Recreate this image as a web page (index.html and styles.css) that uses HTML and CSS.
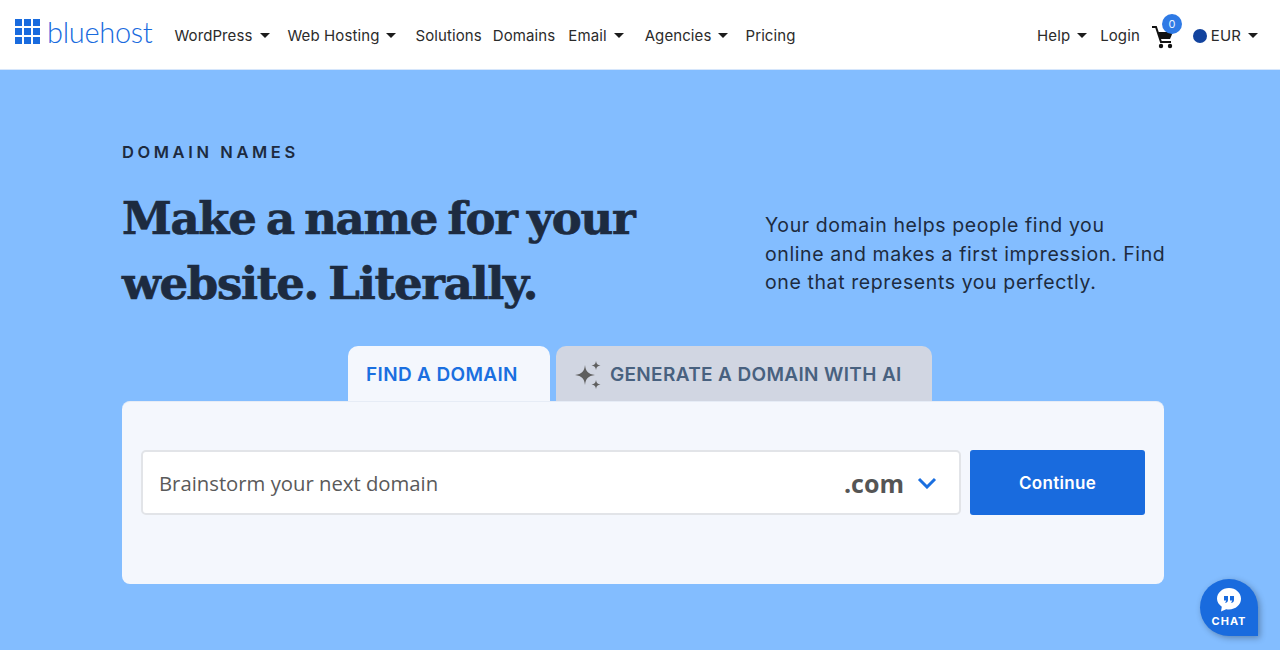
FILE: index.html
```html
<!DOCTYPE html>
<html lang="en">

<head>
    <meta charset="UTF-8">
    <meta name="viewport" content="width=device-width, initial-scale=1.0">
    <title>Domain Names - bluehost</title>
    <link rel="stylesheet" href="styles.css">
</head>

<body>
    <header class="topbar">
        <a class="logo" href="#">
            <svg class="logo-grid" width="25" height="25" viewBox="0 0 25 25">
                <rect x="0" y="0" width="7" height="7" /><rect x="9" y="0" width="7" height="7" /><rect x="18" y="0" width="7" height="7" />
                <rect x="0" y="9" width="7" height="7" /><rect x="9" y="9" width="7" height="7" /><rect x="18" y="9" width="7" height="7" />
                <rect x="0" y="18" width="7" height="7" /><rect x="9" y="18" width="7" height="7" /><rect x="18" y="18" width="7" height="7" />
            </svg>
            <span class="logo-text">bluehost</span>
        </a>

        <nav class="nav-main">
            <a class="nav-link caret wordpress" href="#">WordPress</a>
            <a class="nav-link caret hosting" href="#">Web Hosting</a>
            <a class="nav-link solutions" href="#">Solutions</a>
            <a class="nav-link domains" href="#">Domains</a>
            <a class="nav-link caret email" href="#">Email</a>
            <a class="nav-link caret agencies" href="#">Agencies</a>
            <a class="nav-link" href="#">Pricing</a>
        </nav>

        <nav class="nav-side">
            <a class="nav-link caret" href="#">Help</a>
            <a class="nav-link" href="#">Login</a>
            <a class="cart" href="#">
                <svg width="24" height="26" viewBox="0 0 24 26">
                    <path d="M1 4h4l5 15h10" fill="none" stroke="#111" stroke-width="2" />
                    <path d="M7 9h15l-3 7H9z" fill="#111" />
                    <circle cx="10" cy="23" r="2.200" fill="#111" />
                    <circle cx="19" cy="23" r="2.200" fill="#111" />
                </svg>
                <span class="cart-count">0</span>
            </a>
            <a class="nav-link caret currency" href="#"><span class="flag"></span>EUR</a>
        </nav>
    </header>

    <main class="hero">
        <div class="hero-inner">
            <p class="eyebrow">DOMAIN NAMES</p>
            <div class="hero-row">
                <h1>Make a name for your website. Literally.</h1>
                <p class="lead">Your domain helps people find you online and makes a first impression. Find one that represents you perfectly.</p>
            </div>

            <div class="tabs">
                <button class="tab active" type="button">FIND A DOMAIN</button>
                <button class="tab" type="button">
                    <svg width="27" height="28" viewBox="0 0 27 28">
                        <path d="M10 4c.8 6.500 3 9 10 10-7 1-9.200 3.500-10 10-.8-6.500-3-9-10-10 7-1 9.200-3.500 10-10z" fill="#5f5f5f" />
                        <path d="M21 0c.5 3 1.500 4 4.500 4.500-3 .5-4 1.500-4.500 4.500-.5-3-1.500-4-4.500-4.500 3-.5 4-1.500 4.500-4.500z" fill="#5f5f5f" />
                        <path d="M21 19c.5 3 1.500 4 4.500 4.500-3 .5-4 1.500-4.500 4.500-.5-3-1.500-4-4.500-4.500 3-.5 4-1.500 4.500-4.500z" fill="#5f5f5f" />
                    </svg>
                    GENERATE A DOMAIN WITH AI
                </button>
            </div>

            <div class="search-card">
                <form class="search-form">
                    <div class="search-box">
                        <input type="text" placeholder="Brainstorm your next domain">
                        <span class="tld">.com</span>
                        <svg class="tld-arrow" width="20" height="12" viewBox="0 0 20 12">
                            <path d="M2 2l8 8 8-8" fill="none" stroke="#1a6fe0" stroke-width="3" />
                        </svg>
                    </div>
                    <button class="btn" type="button">Continue</button>
                </form>
            </div>
        </div>

        <a class="chat" href="#">
            <svg width="26" height="25" viewBox="0 0 26 25">
                <path d="M13 1c6.600 0 12 4.800 12 10.800 0 6-5.400 10.700-12 10.700-1 0-1.900-.1-2.800-.3L5 24.500l.8-4.800C3 17.800 1 15 1 11.800 1 5.800 6.400 1 13 1z" fill="#fff" />
                <path d="M8 9h4v4c0 1.500-1 2.600-2.400 3l-.4-1c.7-.3 1-.8 1-1.500H8zM14 9h4v4c0 1.500-1 2.600-2.400 3l-.4-1c.7-.3 1-.8 1-1.500H14z" fill="#196bde" />
            </svg>
            <span>CHAT</span>
        </a>
    </main>
</body>

</html>
```

FILE: styles.css
```css
* {
    margin: 0;
    padding: 0;
    box-sizing: border-box;
}

html,
body {
    height: 100%;
    overflow: hidden;
}

body {
    font-family: 'Inter', 'Liberation Sans', sans-serif;
    background: #83bdff;
    color: #1d2b40;
}

a {
    color: inherit;
    text-decoration: none;
}

/* Top bar */
.topbar {
    height: 70px;
    background: white;
    border-bottom: 1px solid #d6e6fb;
    display: flex;
    align-items: center;
    padding: 0 22px 0 15px;
}

.logo {
    display: flex;
    align-items: center;
    gap: 7px;
    margin-right: 22px;
    margin-top: -6px;
}

.logo-grid {
    fill: #196bde;
    flex-shrink: 0;
}

.logo-text {
    font-family: 'Lato', sans-serif;
    font-weight: 300;
    font-size: 29px;
    line-height: 1;
    color: #196bde;
    letter-spacing: -0.3px;
}

.nav-main,
.nav-side {
    display: flex;
    align-items: center;
    padding-top: 2px;
}

.nav-side {
    margin-left: auto;
}

.nav-link {
    display: inline-flex;
    align-items: center;
    font-size: 15px;
    letter-spacing: 0.1px;
    color: #2b2b2b;
    white-space: nowrap;
}

.caret::after {
    content: "";
    margin-left: 7px;
    border-left: 5px solid transparent;
    border-right: 5px solid transparent;
    border-top: 5px solid #1c1c1c;
}

.wordpress {
    margin-right: 18px;
}

.hosting {
    margin-right: 19px;
}

.solutions {
    margin-right: 11px;
}

.domains {
    margin-right: 13px;
}

.email {
    margin-right: 21px;
}

.agencies {
    margin-right: 17px;
}

.nav-side .nav-link:first-child {
    margin-right: 13px;
}

.cart {
    position: relative;
    display: block;
    width: 24px;
    height: 26px;
    margin: 0 18px 0 11px;
}

.cart-count {
    position: absolute;
    top: -9px;
    left: 11px;
    width: 20px;
    height: 20px;
    border-radius: 50%;
    background: #2f7ae5;
    color: #e8f1ff;
    font-size: 11px;
    line-height: 20px;
    text-align: center;
}

.flag {
    width: 14px;
    height: 14px;
    border-radius: 50%;
    background: #12439e;
    margin-right: 4px;
}

/* Hero */
.hero {
    position: relative;
    height: 580px;
}

.hero-inner {
    width: 1042px;
    margin-left: 122px;
    padding-top: 73px;
}

.eyebrow {
    font-size: 16.500px;
    font-weight: 600;
    letter-spacing: 3.600px;
    line-height: 18px;
}

.hero-row {
    display: flex;
    justify-content: space-between;
    align-items: flex-start;
    margin-top: 25px;
}

h1 {
    width: 560px;
    font-family: 'DejaVu Serif', 'Liberation Serif', serif;
    font-size: 45px;
    font-weight: 700;
    line-height: 65px;
    letter-spacing: -1.300px;
    word-spacing: -4px;
    -webkit-text-stroke: 0.7px #1d2b40;
    color: #1d2b40;
}

.lead {
    flex: none;
    width: 404px;
    margin-top: 25px;
    margin-right: -5px;
    font-size: 19.500px;
    letter-spacing: 0.6px;
    line-height: 28.500px;
    color: #1d2b40;
}

.tabs {
    display: flex;
    gap: 6px;
    margin-top: 30px;
    margin-left: 226px;
}

.tab {
    display: flex;
    align-items: center;
    gap: 8px;
    height: 55px;
    padding: 2px 30px 0 19px;
    border: none;
    border-radius: 10px 10px 0 0;
    background: #d1d6e2;
    color: #48617f;
    font-family: inherit;
    font-size: 19px;
    letter-spacing: 0.35px;
    font-weight: 600;
}

.tab.active {
    padding-left: 18px;
    padding-right: 32px;
    background: #f4f7fd;
    color: #1a6fe0;
}

.search-card {
    height: 183px;
    padding: 48px 19px 0;
    background: #f4f7fd;
    border-radius: 8px;
    border-top: 1px solid #e6ecf6;
}

.search-form {
    display: flex;
    gap: 9px;
}

.search-box {
    flex: 1;
    height: 65px;
    display: flex;
    align-items: center;
    padding: 0 22px 0 16px;
    background: white;
    border: 2px solid #e2e4e8;
    border-radius: 5px;
}

.search-box input {
    flex: 1;
    border: none;
    outline: none;
    background: none;
    font-family: 'Open Sans', sans-serif;
    font-size: 20.300px;
    color: #555;
}

.search-box input::placeholder {
    color: #5a5a5a;
    opacity: 1;
}

.tld {
    font-family: 'Open Sans', sans-serif;
    font-size: 25px;
    font-weight: 700;
    color: #555;
    margin-right: 13px;
}

.btn {
    width: 175px;
    height: 65px;
    background: #196bde;
    color: white;
    border: none;
    border-radius: 3px;
    font-family: inherit;
    font-size: 17px;
    letter-spacing: 0.3px;
    font-weight: 600;
    cursor: pointer;
}

/* Chat bubble */
.chat {
    position: absolute;
    left: 1200px;
    top: 509px;
    width: 58px;
    height: 57px;
    display: flex;
    flex-direction: column;
    align-items: center;
    padding-top: 8px;
    background: #196bde;
    border-radius: 50% 50% 0 50%;
    box-shadow: 2px 2px 6px rgba(0, 0, 0, 0.3);
    color: white;
}

.chat span {
    font-size: 11px;
    font-weight: 700;
    letter-spacing: 1px;
    margin-top: 2px;
}
```
